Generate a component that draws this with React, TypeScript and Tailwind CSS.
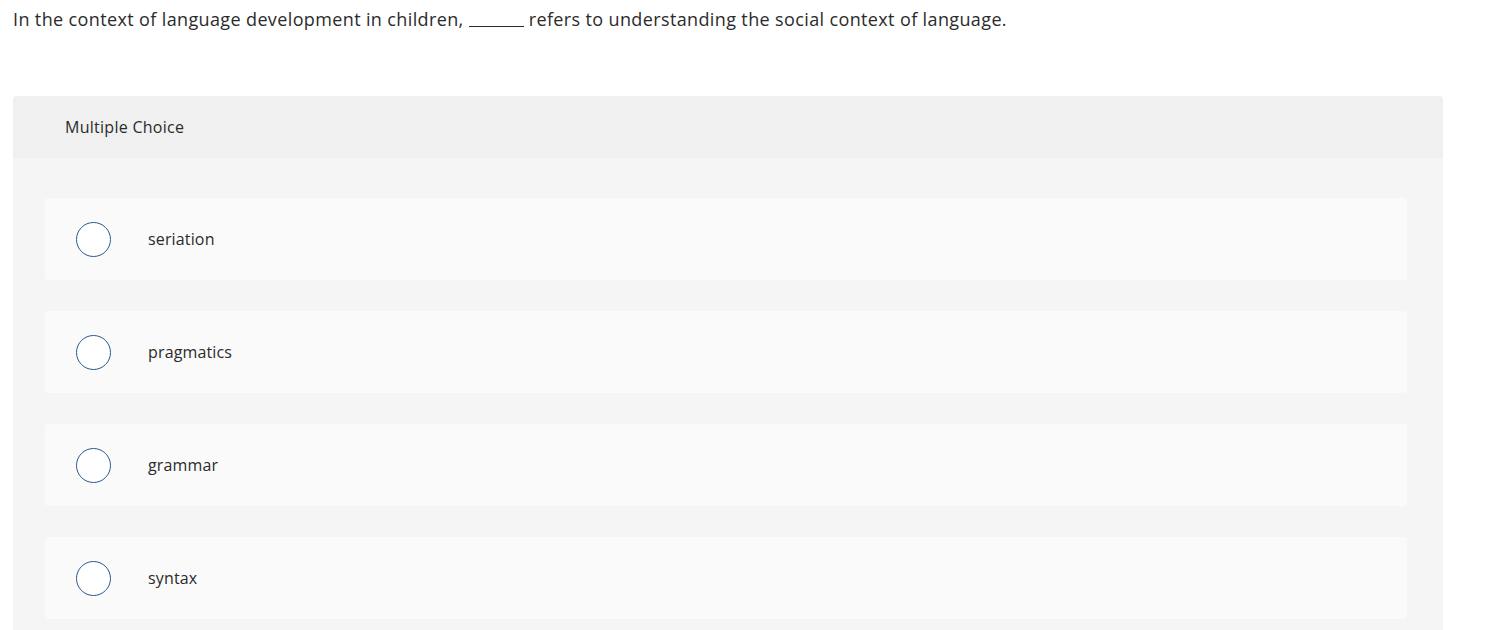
import React from "react";

const options = ["seriation", "pragmatics", "grammar", "syntax"];

export default function App() {
  return (
    <div
      className="w-[1504px] h-[630px] overflow-hidden bg-white text-[#2b2b2b]"
      style={{ fontFamily: "'Open Sans', Lato, sans-serif" }}
    >
      <div className="pl-[13px] pt-[6px] h-[96px]">
        <p className="text-[18px] leading-[26px] tracking-[0.37px]">
          In the context of language development in children,{" "}
          <span className="inline-block w-[55px] border-b border-[#2b2b2b] align-baseline translate-y-[1px]"></span>{" "}
          refers to understanding the social context of language.
        </p>
      </div>
      <div className="ml-[13px] w-[1430px] rounded-t-[4px] overflow-hidden bg-[#f5f5f5] h-[534px]">
        <div className="h-[62px] bg-[#f0f0f0] flex items-center pl-[52px] text-[16px] tracking-[0.27px]">
          Multiple Choice
        </div>
        <div className="pt-[40px] pl-[32px] pr-[36px] flex flex-col gap-[31px]">
          {options.map((o) => (
            <div
              key={o}
              className="h-[82px] rounded-[4px] bg-[#fafafa] flex items-center"
            >
              <div className="ml-[31px] w-[35px] h-[35px] rounded-full border-[1.5px] border-[#2b5a8a] bg-white shrink-0" />
              <span className="ml-[37px] text-[16px] tracking-[0.15px]">{o}</span>
            </div>
          ))}
        </div>
      </div>
    </div>
  );
}
